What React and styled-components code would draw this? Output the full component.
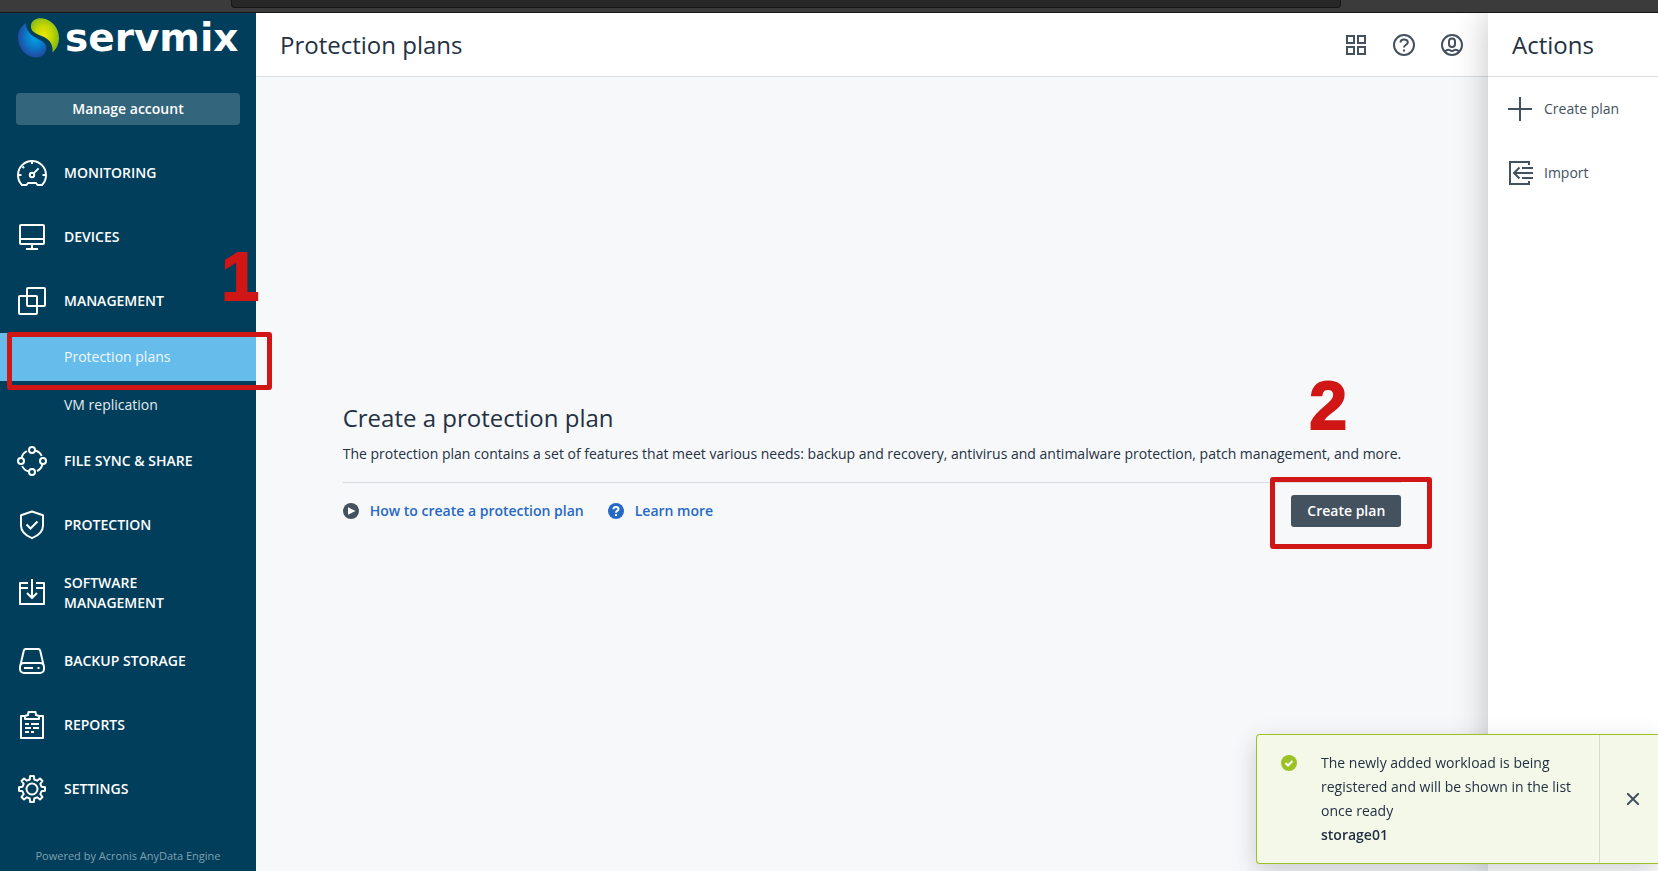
import React from 'react'
import styled, { createGlobalStyle } from 'styled-components'

const GlobalStyle = createGlobalStyle`
*{
    box-sizing:border-box;
}
body{
    margin:0;
    font-family:"Open Sans", "Noto Sans", sans-serif;
    font-size:14px;
    line-height:24px;
    color:#243143;
    background-color:#f7f8fa;
}
a{
    color:inherit;
    text-decoration:none;
}
button{
    font:inherit;
    cursor:pointer;
    border:none;
    padding:0;
    background:none;
}
svg{
    display:block;
    flex-shrink:0;
}
`

const Page = styled.div`
height:100vh;
display:flex;
flex-direction:column;
overflow:hidden;
`

const BrowserBar = styled.div`
height:13px;
flex-shrink:0;
padding:0 317px 0 231px;
background-color:#3b3b3b;
border-bottom:1px solid #161616;
`

const AddressBar = styled.div`
height:8px;
background-color:#272727;
border:1px solid #161616;
border-top:none;
border-radius:0 0 4px 4px;
`

const Shell = styled.div`
flex:1;
min-height:0;
display:flex;
overflow:hidden;
`

/* Sidebar */

const Sidebar = styled.aside`
width:256px;
flex-shrink:0;
display:flex;
flex-direction:column;
background-color:#003e5c;
color:#fff;
position:relative;
z-index:2;
`

const Logo = styled.a`
height:80px;
flex-shrink:0;
padding:4px 16px 0;
display:flex;
align-items:flex-start;
gap:5px;
`

const LogoText = styled.span`
font-family:"DejaVu Sans", sans-serif;
font-size:39px;
font-weight:700;
line-height:42px;
`

const ManageButton = styled.button`
height:32px;
margin:0 16px 16px;
flex-shrink:0;
border-radius:4px;
background-color:#33657d;
color:#fff;
font-weight:600;
`

const Nav = styled.nav`
flex:1;
`

const NavItem = styled.a`
position:relative;
min-height:64px;
padding:14px;
display:flex;
align-items:center;
gap:14px;
font-weight:600;
line-height:20px;
`

const NavLabel = styled.span`
max-width:140px;
padding:2px 0;
`

const SubItem = styled.a`
position:relative;
height:48px;
padding-left:64px;
display:flex;
align-items:center;
background-color:${props => props.$active ? '#66bdec' : 'transparent'};
color:${props => props.$active ? '#f0f8fd' : '#e5ecef'};
`

const PoweredBy = styled.div`
padding-bottom:3px;
text-align:center;
font-size:11px;
line-height:24px;
color:#80a0ae;
`

/* Content */

const Main = styled.main`
flex:1;
min-width:0;
display:flex;
flex-direction:column;
`

const Header = styled.header`
height:64px;
flex-shrink:0;
padding:0 24px;
display:flex;
align-items:center;
justify-content:space-between;
background-color:#fff;
border-bottom:1px solid #d9dde0;
`

const Title = styled.h1`
margin:0;
font-size:24px;
font-weight:400;
line-height:32px;
`

const HeaderIcons = styled.div`
display:flex;
gap:24px;
`

const IconButton = styled.button`
width:24px;
height:24px;
color:#44515f;
`

const Content = styled.div`
flex:1;
display:flex;
align-items:center;
justify-content:center;
`

const Intro = styled.section`
padding-bottom:20px;
`

const IntroTitle = styled.h2`
margin:0 0 8px;
font-size:24px;
font-weight:400;
line-height:32px;
`

const IntroText = styled.p`
margin:0;
padding-bottom:16px;
border-bottom:1px solid #d9dde0;
`

const IntroFooter = styled.div`
padding-top:12px;
display:flex;
align-items:center;
gap:24px;
`

const HelpLink = styled.a`
display:flex;
align-items:center;
gap:11px;
color:#2668c5;
font-weight:600;
`

const CreateWrap = styled.div`
position:relative;
margin-left:auto;
`

const CreateButton = styled.button`
height:32px;
padding:0 16px;
display:block;
border-radius:3px;
background-color:#44515f;
color:#fff;
font-weight:600;
`

/* Right panel */

const Actions = styled.aside`
width:170px;
flex-shrink:0;
background-color:#fff;
box-shadow:0 0 32px rgba(0,0,0,0.24);
`

const ActionItem = styled.button`
width:100%;
height:64px;
padding-left:20px;
display:flex;
align-items:center;
gap:12px;
color:#44515f;
`

/* Toast */

const Toast = styled.div`
position:fixed;
right:0;
bottom:7px;
z-index:3;
width:402px;
display:flex;
background-color:#f4f8e9;
border:1px solid #9bc225;
border-right:none;
border-radius:4px 0 0 4px;
box-shadow:0 8px 24px rgba(36,49,67,0.22);
`

const ToastBody = styled.div`
flex:1;
padding:16px 24px;
display:flex;
gap:24px;
`

const ToastIcon = styled.div`
padding-top:4px;
`

const ToastName = styled.strong`
font-weight:600;
`

const ToastClose = styled.button`
width:59px;
padding-left:7px;
display:flex;
align-items:center;
justify-content:center;
border-left:1px solid #d6dcd2;
color:#44515f;
`

/* Red marks */

const MarkBox = styled.span`
position:absolute;
border:5px solid #d01716;
border-radius:3px;
pointer-events:none;
`

const NavMark = styled(MarkBox)`
top:-1px;
right:-16px;
bottom:-9px;
left:7px;
z-index:1;
`

const ButtonMark = styled(MarkBox)`
top:-18px;
right:-31px;
bottom:-22px;
left:-21px;
`

const MarkNumber = styled.span`
position:absolute;
font-family:"Liberation Sans", Arial, sans-serif;
font-size:68px;
font-weight:700;
line-height:68px;
color:#d01716;
-webkit-text-stroke:2px #d01716;
pointer-events:none;
`

const NavNumber = styled(MarkNumber)`
right:-3px;
bottom:23px;
`

const ButtonNumber = styled(MarkNumber)`
left:18px;
bottom:88px;
`

const NavIcon = ({ children }) => (
    <svg width="36" height="36" viewBox="0 0 36 36" fill="none" stroke="currentColor" strokeWidth="2" aria-hidden="true">
        {children}
    </svg>
)

const MonitoringIcon = () => (
    <NavIcon>
        <path d="M8 30C5 27 4 23.500 4 20a14 14 0 0 1 28 0c0 3.500-1 7-4 10h-4.500l-1.500-2h-8l-1.500 2z" strokeLinejoin="round" />
        <circle cx="18" cy="20" r="2.200" />
        <path d="M19.600 18.400l5-5M18 6v3M4.500 20h3M28.500 20h3M8.400 11.400l1.700 1.500" />
    </NavIcon>
)

const DevicesIcon = () => (
    <NavIcon>
        <rect x="6" y="6" width="24" height="19" rx="1" />
        <path d="M6 20h24M18 25v4M12 30h12" />
    </NavIcon>
)

const ManagementIcon = () => (
    <NavIcon>
        <rect x="13" y="5" width="18" height="18" rx="1" />
        <rect x="5" y="13" width="18" height="18" rx="1" />
    </NavIcon>
)

const SyncIcon = () => (
    <NavIcon>
        <circle cx="18" cy="7" r="3" />
        <circle cx="29" cy="18" r="3" />
        <circle cx="18" cy="29" r="3" />
        <circle cx="7" cy="18" r="3" />
        <path d="M21 7.500c3 .7 5.600 2.700 6.700 5.500M28.500 21c-.7 3-2.700 5.900-5.500 7M15 28.500c-3-.7-5.700-2.700-6.800-5.500M7.500 15c.7-3 2.700-5.800 5.500-6.900" />
    </NavIcon>
)

const ProtectionIcon = () => (
    <NavIcon>
        <path d="M18 4.500l11 3.700v10.300c0 6-4.500 10-11 12.700-6.500-2.700-11-6.700-11-12.700V8.200z" strokeLinejoin="round" />
        <path d="M12.500 17.500l4 4 7-7" />
    </NavIcon>
)

const SoftwareIcon = () => (
    <NavIcon>
        <path d="M14 8H6v21h24V8h-8M6 13h8M22 13h8M18 4v18M13 18l5 5 5-5" strokeLinejoin="round" />
    </NavIcon>
)

const StorageIcon = () => (
    <NavIcon>
        <path d="M6.500 22l3.300-14.500c.3-1 1-1.500 2-1.500h12.400c1 0 1.700.5 2 1.500L29.500 22" />
        <rect x="6" y="20" width="24" height="10" rx="4" />
        <path d="M10 25h9M23.500 25h2" />
    </NavIcon>
)

const ReportsIcon = () => (
    <NavIcon>
        <path d="M11 9H7v22h22V9h-4" strokeLinejoin="round" />
        <path d="M11 12V9l3-1 .5-3h7l.5 3 3 1v3z" strokeLinejoin="round" />
        <path d="M11 17h4M17 17h8M11 21h6M19 21h6M11 25h4M17 25h3" />
    </NavIcon>
)

const SettingsIcon = () => (
    <NavIcon>
        <circle cx="18" cy="18" r="5.500" />
        <path d="M15.700 8.500L16.200 5h3.600l.5 3.500 2.800 1.200L26 7.500 28.500 10l-2.200 2.900 1.200 2.800 3.500.5v3.600l-3.500.5-1.200 2.800 2.200 2.900-2.500 2.500-2.900-2.200-2.800 1.200-.5 3.500h-3.600l-.5-3.500-2.800-1.200L10 28.500 7.500 26l2.200-2.900-1.200-2.800L5 19.800v-3.600l3.500-.5 1.200-2.800L7.500 10 10 7.500l2.900 2.200z" strokeLinejoin="round" />
    </NavIcon>
)

const LogoIcon = () => (
    <svg width="44" height="42" viewBox="0 0 44 42" aria-hidden="true">
        <defs>
            <radialGradient id="blue" cx="0.600" cy="0.400" r="0.650">
                <stop offset="0" stopColor="#00a8ec" />
                <stop offset="0.500" stopColor="#0b78c8" />
                <stop offset="1" stopColor="#26429b" />
            </radialGradient>
            <radialGradient id="green" cx="0.450" cy="0.500" r="0.600">
                <stop offset="0" stopColor="#ebe600" />
                <stop offset="0.500" stopColor="#c3d600" />
                <stop offset="1" stopColor="#7ab51d" />
            </radialGradient>
        </defs>
        <path d="M10 6C4 10 1.500 15.500 2 21.500 2.600 32 10.500 40.500 20.500 40.500c5.500 0 9.500-4 9.800-9 .2-4.500-2.300-6.600-7.300-9C15 18.700 10 14 10 6z" fill="url(#blue)" />
        <path d="M15 8c1-5 6-7.500 12-6.500C36 3 43 11 43 21c0 6-2.500 11-6.500 14.500.5-7-1.500-12-8.500-15.500C20 16.500 14 15 15 8z" fill="url(#green)" />
    </svg>
)

const GridIcon = () => (
    <svg width="24" height="24" viewBox="0 0 24 24" fill="none" stroke="currentColor" strokeWidth="2" aria-hidden="true">
        <path d="M3 3h7v7H3zM14 3h7v7h-7zM3 14h7v7H3zM14 14h7v7h-7z" />
    </svg>
)

const HelpIcon = () => (
    <svg width="24" height="24" viewBox="0 0 24 24" fill="none" stroke="currentColor" strokeWidth="2" aria-hidden="true">
        <circle cx="12" cy="12" r="10" />
        <path d="M8.500 9.500C8.500 7.500 10 6.500 12 6.500s3.800 1 3.800 3c0 2.300-3.800 2.200-3.800 5M12 16.500v2" />
    </svg>
)

const UserIcon = () => (
    <svg width="24" height="24" viewBox="0 0 24 24" fill="none" stroke="currentColor" strokeWidth="2" aria-hidden="true">
        <circle cx="12" cy="12" r="10" />
        <rect x="9" y="5.500" width="6" height="8.500" rx="3" />
        <path d="M4.500 18.500c2-1.500 4.300-2 5.300-1.300 1.400.9 3 .9 4.400 0 1-.7 3.300-.2 5.300 1.300" />
    </svg>
)

const PlusIcon = () => (
    <svg width="24" height="24" viewBox="0 0 24 24" stroke="currentColor" strokeWidth="2" aria-hidden="true">
        <path d="M12 0v24M0 12h24" />
    </svg>
)

const ImportIcon = () => (
    <svg width="24" height="24" viewBox="1 0 24 24" fill="none" stroke="currentColor" strokeWidth="2" overflow="visible" aria-hidden="true">
        <path d="M22 4V1H3v22h19v-3M26 12H8M12.500 6.500L7 12l5.500 5.500M15 7h11M15 17h11" />
    </svg>
)

const PlayIcon = () => (
    <svg width="16" height="16" viewBox="0 0 16 16" aria-hidden="true">
        <circle cx="8" cy="8" r="8" fill="#44515f" />
        <path d="M5 4.200v7.600L12.500 8z" fill="#fff" />
    </svg>
)

const HelpSolidIcon = () => (
    <svg width="16" height="16" viewBox="0 0 16 16" fill="none" stroke="#fff" strokeWidth="2" aria-hidden="true">
        <circle cx="8" cy="8" r="8" fill="#2668c5" stroke="none" />
        <path d="M5.500 6.300C5.500 4.800 6.600 4 8 4s2.500.8 2.500 2.200C10.500 7.800 8 7.600 8 9.700M8 11v2" />
    </svg>
)

const SuccessIcon = () => (
    <svg width="16" height="16" viewBox="0 0 16 16" fill="none" aria-hidden="true">
        <circle cx="8" cy="8" r="8" fill="#9bc225" />
        <path d="M4.500 8L7 10.500 11.500 6" stroke="#fff" strokeWidth="2" />
    </svg>
)

const CloseIcon = () => (
    <svg width="12" height="12" viewBox="0 0 12 12" stroke="currentColor" strokeWidth="2" aria-hidden="true">
        <path d="M0 0l12 12M12 0L0 12" />
    </svg>
)

const bottomItems = [
    { label: 'FILE SYNC & SHARE', Icon: SyncIcon },
    { label: 'PROTECTION', Icon: ProtectionIcon },
    { label: 'SOFTWARE MANAGEMENT', Icon: SoftwareIcon },
    { label: 'BACKUP STORAGE', Icon: StorageIcon },
    { label: 'REPORTS', Icon: ReportsIcon },
    { label: 'SETTINGS', Icon: SettingsIcon },
]

function App() {
    return (
        <Page>
            <GlobalStyle />
            <BrowserBar>
                <AddressBar />
            </BrowserBar>
            <Shell>
                <Sidebar>
                    <Logo href="#">
                        <LogoIcon />
                        <LogoText>servmix</LogoText>
                    </Logo>
                    <ManageButton>Manage account</ManageButton>
                    <Nav>
                        <NavItem href="#"><MonitoringIcon /><NavLabel>MONITORING</NavLabel></NavItem>
                        <NavItem href="#"><DevicesIcon /><NavLabel>DEVICES</NavLabel></NavItem>
                        <NavItem href="#">
                            <ManagementIcon />
                            <NavLabel>MANAGEMENT</NavLabel>
                            <NavNumber>1</NavNumber>
                        </NavItem>
                        <SubItem href="#" $active>Protection plans<NavMark /></SubItem>
                        <SubItem href="#">VM replication</SubItem>
                        {bottomItems.map(({ label, Icon }) => (
                            <NavItem href="#" key={label}><Icon /><NavLabel>{label}</NavLabel></NavItem>
                        ))}
                    </Nav>
                    <PoweredBy>Powered by Acronis AnyData Engine</PoweredBy>
                </Sidebar>

                <Main>
                    <Header>
                        <Title>Protection plans</Title>
                        <HeaderIcons>
                            <IconButton aria-label="Products"><GridIcon /></IconButton>
                            <IconButton aria-label="Help"><HelpIcon /></IconButton>
                            <IconButton aria-label="Account"><UserIcon /></IconButton>
                        </HeaderIcons>
                    </Header>
                    <Content>
                        <Intro>
                            <IntroTitle>Create a protection plan</IntroTitle>
                            <IntroText>The protection plan contains a set of features that meet various needs: backup and recovery, antivirus and antimalware protection, patch management, and more.</IntroText>
                            <IntroFooter>
                                <HelpLink href="#"><PlayIcon />How to create a protection plan</HelpLink>
                                <HelpLink href="#"><HelpSolidIcon />Learn more</HelpLink>
                                <CreateWrap>
                                    <CreateButton>Create plan</CreateButton>
                                    <ButtonMark />
                                    <ButtonNumber>2</ButtonNumber>
                                </CreateWrap>
                            </IntroFooter>
                        </Intro>
                    </Content>
                </Main>

                <Actions>
                    <Header as="div"><Title as="h2">Actions</Title></Header>
                    <ActionItem><PlusIcon />Create plan</ActionItem>
                    <ActionItem><ImportIcon />Import</ActionItem>
                </Actions>
            </Shell>

            <Toast role="status">
                <ToastBody>
                    <ToastIcon><SuccessIcon /></ToastIcon>
                    <div>
                        The newly added workload is being registered and will be shown in the list once ready
                        <br />
                        <ToastName>storage01</ToastName>
                    </div>
                </ToastBody>
                <ToastClose aria-label="Close"><CloseIcon /></ToastClose>
            </Toast>
        </Page>
    )
}

export default App
